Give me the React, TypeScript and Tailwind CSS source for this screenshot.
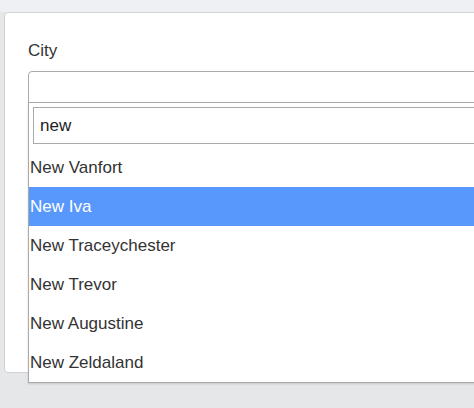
const cities = [
  'New Vanfort',
  'New Iva',
  'New Traceychester',
  'New Trevor',
  'New Augustine',
  'New Zeldaland',
];

export default function App() {
  const active = 'New Iva';

  return (
    <div
      className="relative w-[474px] h-[408px] overflow-hidden bg-[#e6e7e9] text-[#333] text-[17px]"
      style={{ fontFamily: '"Liberation Sans", Arial, sans-serif' }}
    >
      <div className="h-[12px] bg-[#eef0f3]" />
      <div className="ml-[4px] w-[620px] h-[361px] bg-white border border-[#cfd2d6] rounded-[4px] px-[23px] pt-[27px]">
        <label className="block leading-[22px]">City</label>
        <div className="relative mt-[9px] w-[520px]">
          {/* select box */}
          <div className="h-[32px] border border-[#aaa] rounded-t-[4px] bg-white" />

          {/* open dropdown */}
          <div className="absolute left-0 top-[31px] w-full bg-white border border-[#aaa] shadow-[0_1px_2px_rgba(0,0,0,0.15)]">
            <div className="p-[4px]">
              <input
                value="new"
                readOnly
                className="block w-full h-[37px] border border-[#aaa] px-[6px] text-[17px] text-[#222] outline-none"
                style={{ fontFamily: '"Liberation Sans", Arial, sans-serif' }}
              />
            </div>
            <ul>
              {cities.map((c) => (
                <li
                  key={c}
                  className={
                    c === active
                      ? 'pl-px py-[6px] leading-[27px] bg-[#5897fb] text-white'
                      : 'pl-px py-[6px] leading-[27px] text-[#333]'
                  }
                >
                  {c}
                </li>
              ))}
            </ul>
          </div>
        </div>
      </div>
    </div>
  );
}
